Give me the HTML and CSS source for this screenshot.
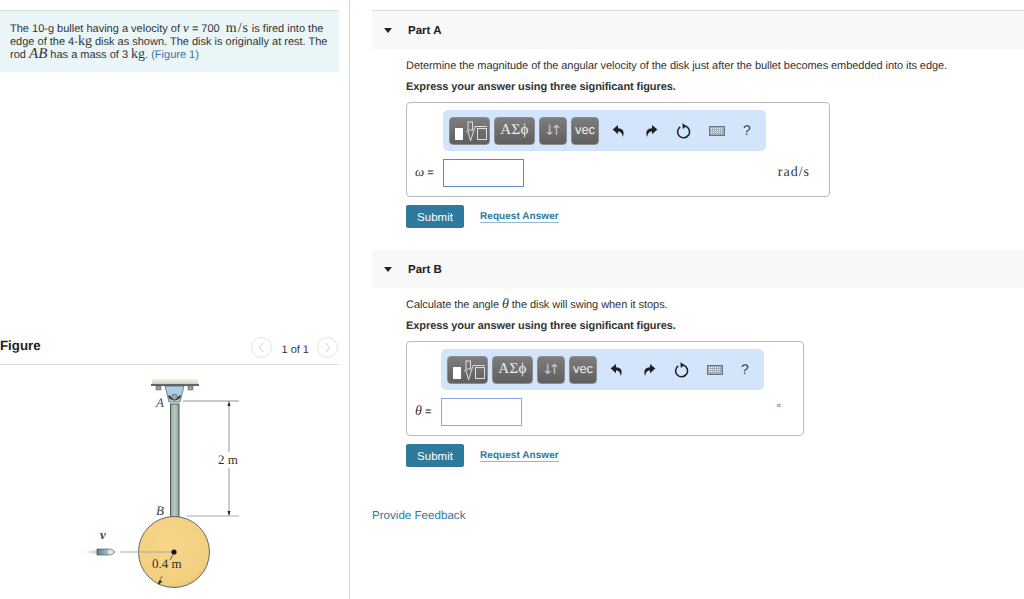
FILE: index.html
```html
<!DOCTYPE html>
<html lang="en">
<head>
  <meta charset="UTF-8" />
  <title>Part A and Part B</title>
  <link rel="stylesheet" href="styles.css">
</head>
<body>

<svg class="defs" width="0" height="0">
  <symbol id="undo" viewBox="0 0 14 14"><path d="M6 1 0.6 5.6 6 10.2V7.4C8.6 7.4 10.2 8.8 10.8 13 12.8 8 11.2 4.4 6 4.2Z"/></symbol>
  <symbol id="redo" viewBox="0 0 14 14"><path d="M8 1 13.4 5.6 8 10.2V7.4C5.4 7.4 3.8 8.8 3.2 13 1.2 8 2.8 4.4 8 4.2Z"/></symbol>
  <symbol id="reset" viewBox="0 0 16 16"><path d="M9.8 3.2A6 6 0 1 1 4.2 3.8" fill="none" stroke="#222" stroke-width="1.6"/><path d="M6.4 0.2 10.6 3 6.8 6Z"/></symbol>
  <symbol id="keys" viewBox="0 0 16 10">
    <rect x="0.5" y="0.5" width="15" height="9" fill="#a3adb5" stroke="#6c7278"/>
    <path d="M2 2.5H14M2 4.5H14M2 6.5H14" stroke="#eef2f8" stroke-width="1" stroke-dasharray="1 1"/>
  </symbol>
  <symbol id="template" viewBox="0 0 41 28">
    <rect x="6" y="11" width="8" height="12" fill="#fff"/>
    <rect x="19" y="5" width="4.5" height="8" fill="none" stroke="#ddd"/>
    <path d="M17 15 19 14 21.5 24 26 9.5H38" fill="none" stroke="#ddd"/>
    <rect x="28.5" y="11.5" width="9" height="11" fill="none" stroke="#ddd"/>
  </symbol>
  <symbol id="prev" viewBox="0 0 21 21"><path d="M12.5 5.5 8 10.5 12.5 15.5" fill="none" stroke="#c4c4c4"/></symbol>
  <symbol id="next" viewBox="0 0 21 21"><path d="M8.5 5.5 13 10.5 8.5 15.5" fill="none" stroke="#c4c4c4"/></symbol>
</svg>

<div class="page">

  <div class="left">
    <div class="problem">
      The 10-g bullet having a velocity of <i class="math">v</i> = 700 &nbsp;<span class="math unit-text wide">m/s</span> is fired into the
      edge of the 4-<span class="math unit-text">kg</span> disk as shown. The disk is originally at rest. The
      rod <i class="math big">AB</i> has a mass of 3 <span class="math unit-text">kg</span>. <a class="link" href="#">(Figure 1)</a>
    </div>

    <div class="figure-head">
      <strong>Figure</strong>
      <div class="pager">
        <svg class="round" width="21" height="21"><use href="#prev"/></svg>
        <span class="count">1 of 1</span>
        <svg class="round" width="21" height="21"><use href="#next"/></svg>
      </div>
    </div>

    <svg class="diagram" width="339" height="234" viewBox="0 0 339 234">
      <defs>
        <linearGradient id="ceil" x1="0" y1="0" x2="0" y2="1">
          <stop offset="0" stop-color="#f4f2ea"/>
          <stop offset="1" stop-color="#c9c7b6"/>
        </linearGradient>
        <linearGradient id="rod" x1="0" y1="0" x2="1" y2="0">
          <stop offset="0" stop-color="#8fa8a0"/>
          <stop offset="0.5" stop-color="#b6cbc4"/>
          <stop offset="1" stop-color="#8aa39b"/>
        </linearGradient>
        <radialGradient id="disk" cx="0.45" cy="0.4" r="0.65">
          <stop offset="0" stop-color="#f6d68c"/>
          <stop offset="0.85" stop-color="#f3cf7f"/>
          <stop offset="1" stop-color="#e0b968"/>
        </radialGradient>
        <linearGradient id="tail" x1="0" y1="0" x2="1" y2="0">
          <stop offset="0" stop-color="#fff"/>
          <stop offset="1" stop-color="#bcd2e0"/>
        </linearGradient>
        <linearGradient id="shell" x1="0" y1="0" x2="1" y2="0">
          <stop offset="0" stop-color="#5d7f94"/>
          <stop offset="0.55" stop-color="#9db7c6"/>
          <stop offset="0.7" stop-color="#ecebe2"/>
          <stop offset="1" stop-color="#dcdcd2"/>
        </linearGradient>
      </defs>

      <!-- ceiling and pin -->
      <rect x="152" y="13" width="46" height="6" fill="url(#ceil)"/>
      <rect x="151" y="18" width="48" height="2" fill="#666"/>
      <rect x="156" y="20" width="5" height="4" fill="#7fa6bd" stroke="#555" stroke-width="0.5"/>
      <rect x="188" y="20" width="5" height="4" fill="#7fa6bd" stroke="#555" stroke-width="0.5"/>
      <path d="M165 20H184L180 36H169Z" fill="#a8cfe3" stroke="#555" stroke-width="0.7"/>
      <path d="M168 30A7 7 0 0 0 181 30L179.5 29A5.4 5.4 0 0 1 169.5 29Z" fill="#333"/>

      <!-- rod -->
      <rect x="170.5" y="38" width="8.5" height="113" fill="url(#rod)" stroke="#555" stroke-width="1"/>
      <circle cx="174.5" cy="31" r="2.8" fill="#a3a9ab" stroke="#555" stroke-width="0.7"/>

      <!-- dimension lines -->
      <path d="M183 35H239" stroke="#777" stroke-width="0.8"/>
      <path d="M187 150H239" stroke="#aaa" stroke-width="1"/>
      <path d="M229 37V86M229 102V149" stroke="#999" stroke-width="1"/>
      <path d="M229 35 227.5 40H230.5ZM229 150 227.5 145H230.5Z" fill="#222"/>
      <text class="dim" x="218" y="98">2 m</text>

      <!-- disk -->
      <circle cx="174" cy="186" r="35.5" fill="url(#disk)" stroke="#666" stroke-width="1"/>
      <path d="M120 186H174" stroke="#aaa" stroke-width="1"/>
      <circle cx="174" cy="186" r="2.6" fill="#111"/>
      <path d="M173 189 170 194M162 210 158 218" stroke="#333" stroke-width="0.7"/>
      <path d="M158 219 162.4 215.6 159.6 214.2Z" fill="#222"/>
      <text class="dim" x="152" y="202">0.4 m</text>

      <!-- bullet -->
      <rect x="84" y="184.5" width="13" height="3" fill="url(#tail)"/>
      <path d="M97 183H109C112 183 114 185 115 186 114 187 112 189 109 189H97Z" fill="url(#shell)" stroke="#444" stroke-width="0.6"/>

      <text class="tag" x="156" y="41">A</text>
      <text class="tag" x="156" y="149">B</text>
      <text class="tag tag-v" x="100" y="173">v</text>
    </svg>
  </div>

  <div class="right">

    <div class="part-head first"><span class="caret"></span><strong>Part A</strong></div>
    <div class="part-body">
      <p class="question">Determine the magnitude of the angular velocity of the disk just after the bullet becomes embedded into its edge.</p>
      <p class="express">Express your answer using three significant figures.</p>

      <div class="answer answer-a">
        <div class="toolbar">
          <span class="tool t-wide"><svg width="41" height="28"><use href="#template"/></svg></span>
          <span class="tool t-wide serif">&Alpha;&Sigma;&#981;</span>
          <span class="tool t-arrows arrows">&#8595;&#8593;</span>
          <span class="tool t-arrows vec">vec</span>
          <svg class="act act-first" width="14" height="14"><use href="#undo"/></svg>
          <svg class="act" width="14" height="14"><use href="#redo"/></svg>
          <svg class="act" width="16" height="16"><use href="#reset"/></svg>
          <svg class="act act-keys" width="16" height="10"><use href="#keys"/></svg>
          <span class="help">?</span>
        </div>
        <div class="entry">
          <span class="symbol"><i class="math">&omega;</i> =</span>
          <span class="field"></span>
          <span class="unit">rad/s</span>
        </div>
      </div>

      <div class="actions">
        <button class="submit">Submit</button>
        <a class="request" href="#">Request Answer</a>
      </div>
    </div>

    <div class="part-head"><span class="caret"></span><strong>Part B</strong></div>
    <div class="part-body">
      <p class="question">Calculate the angle <i class="math theta">&theta;</i> the disk will swing when it stops.</p>
      <p class="express">Express your answer using three significant figures.</p>

      <div class="answer answer-b">
        <div class="toolbar">
          <span class="tool t-wide"><svg width="41" height="28"><use href="#template"/></svg></span>
          <span class="tool t-wide serif">&Alpha;&Sigma;&#981;</span>
          <span class="tool t-arrows arrows">&#8595;&#8593;</span>
          <span class="tool t-arrows vec">vec</span>
          <svg class="act act-first" width="14" height="14"><use href="#undo"/></svg>
          <svg class="act" width="14" height="14"><use href="#redo"/></svg>
          <svg class="act" width="16" height="16"><use href="#reset"/></svg>
          <svg class="act act-keys" width="16" height="10"><use href="#keys"/></svg>
          <span class="help">?</span>
        </div>
        <div class="entry">
          <span class="symbol"><i class="math theta">&theta;</i> =</span>
          <span class="field"></span>
          <span class="unit degree">&deg;</span>
        </div>
      </div>

      <div class="actions">
        <button class="submit">Submit</button>
        <a class="request" href="#">Request Answer</a>
      </div>
    </div>

    <a class="feedback" href="#">Provide Feedback</a>
  </div>

</div>

</body>
</html>
```

FILE: styles.css
```css
body {
  margin: 0;
  background: #fff;
  color: #333;
  font-family: "Liberation Sans", Arial, sans-serif;
  font-size: 11px;
  text-rendering: geometricPrecision;
  overflow: hidden;
}

a {
  text-decoration: none;
}

.defs {
  display: block;
  height: 0;
}

.page {
  display: flex;
  height: 599px;
}

.left {
  width: 349px;
  flex: none;
  border-right: 1px solid #d8d8d8;
  padding-top: 10px;
}

.problem {
  width: 319px;
  padding: 12px 10px 11px;
  height: 38px;
  border-top: 1px solid #dcdfe2;
  background: #eaf5f8;
  line-height: 13px;
}

.math {
  font-family: "Liberation Serif", serif;
  font-size: 13px;
  line-height: 0;
}

.unit-text {
  font-size: 14px;
}

.unit-text.wide {
  letter-spacing: 0.9px;
}

.math.big {
  font-size: 15px;
}

.theta {
  font-size: 14px;
}

.link {
  color: #2f7a9c;
}

.figure-head {
  width: 339px;
  height: 29px;
  margin-top: 263px;
  display: flex;
  justify-content: space-between;
  align-items: flex-start;
  border-bottom: 1px solid #ddd;
}

.figure-head strong {
  font-size: 13.3px;
  color: #222;
  line-height: 22px;
}

.pager {
  display: flex;
  align-items: center;
  gap: 9px;
  margin-top: 2px;
  margin-right: 1px;
}

.count {
  margin-top: 5px;
  margin-right: -1px;
}

.round {
  border: 1px solid #e4e4e4;
  border-radius: 50%;
  box-sizing: border-box;
}

.diagram {
  display: block;
  margin-top: 1px;
}

.dim {
  font-family: "Liberation Serif", serif;
  font-size: 13px;
  fill: #333;
}

.tag {
  font-family: "Liberation Serif", serif;
  font-size: 13px;
  font-style: italic;
  fill: #444;
}

.tag-v {
  font-weight: bold;
}

.right {
  flex: 1;
  margin-left: 22px;
  padding-top: 10px;
  min-width: 0;
}

.part-head {
  height: 38px;
  background: #f8f8f8;
  display: flex;
  align-items: center;
  padding-left: 12px;
}

.part-head.first {
  border-top: 1px solid #dcdcdc;
}

.part-head strong {
  margin: 2px 0 0 16px;
  font-size: 11.5px;
  color: #222;
}

.caret {
  width: 0;
  height: 0;
  border-left: 4px solid transparent;
  border-right: 4px solid transparent;
  border-top: 5px solid #222;
}

.part-body {
  padding: 11px 0 0 34px;
  height: 201px;
  box-sizing: border-box;
}

.question {
  margin: 0;
  line-height: 13px;
  letter-spacing: -0.06px;
}

.express {
  margin: 8px 0 0;
  font-weight: bold;
  line-height: 13px;
  letter-spacing: -0.08px;
}

.answer {
  margin-top: 8px;
  border: 1px solid #bbb;
  border-radius: 4px;
  box-sizing: border-box;
  height: 95px;
  padding-top: 7px;
}

.answer-a {
  width: 424px;
  padding-left: 36px;
}

.answer-b {
  width: 398px;
  padding-left: 34px;
}

.toolbar {
  width: 323px;
  height: 41px;
  box-sizing: border-box;
  padding: 7px 6px;
  background: #d2e5fb;
  border-radius: 5px;
  display: flex;
  align-items: center;
  gap: 4px;
}

.tool {
  height: 28px;
  box-sizing: border-box;
  border-radius: 4px;
  border: 1px solid #8c8c8c;
  background: linear-gradient(#7d7d7d, #5f5f5f);
  color: #eee;
  display: flex;
  align-items: center;
  justify-content: center;
  font-size: 12px;
}

.tool svg {
  margin: -1px;
  flex: none;
}

.t-wide {
  width: 41px;
}

.t-arrows {
  width: 28px;
}

.serif {
  font-family: "Liberation Serif", serif;
  font-size: 15px;
  letter-spacing: 0.3px;
}

.arrows {
  font-size: 14px;
  font-family: "DejaVu Sans", sans-serif;
  letter-spacing: -5px;
  padding-right: 5px;
  color: #c8c8c8;
}

.vec {
  font-size: 13px;
  padding-bottom: 3px;
}

.act {
  fill: #222;
  margin-left: 14px;
  flex: none;
}

.act-first {
  margin-left: 9px;
}

.act-keys {
  margin-left: 13px;
}

.help {
  margin: -2px 0 0 14px;
  font-size: 14px;
  color: #333;
}

.entry {
  display: flex;
  align-items: center;
  height: 28px;
  margin-top: 8px;
  margin-left: -36px;
}

.answer-b .entry {
  margin-left: -34px;
}

.symbol {
  width: 36px;
  padding-left: 8px;
  box-sizing: border-box;
  flex: none;
}

.answer-b .symbol {
  width: 34px;
}

.field {
  width: 81px;
  height: 28px;
  box-sizing: border-box;
  border: 1px solid #5f86c8;
  background: #fff;
}

.answer-b .field {
  border-color: #8aa8e0;
}

.unit {
  margin-left: auto;
  margin-right: 19px;
  font-family: "Liberation Serif", serif;
  font-size: 14px;
  letter-spacing: 1px;
}

.unit.degree {
  margin-right: 21px;
  margin-top: -8px;
  font-size: 11px;
}

.actions {
  display: flex;
  align-items: center;
  margin-top: 8px;
  gap: 16px;
}

.submit {
  width: 58px;
  height: 23px;
  padding: 0;
  border: none;
  border-radius: 2px;
  background: #2f7a9c;
  color: #fff;
  font-family: "Liberation Sans", Arial, sans-serif;
  font-size: 11.5px;
}

.request {
  color: #2f7a9c;
  font-weight: bold;
  font-size: 10px;
  letter-spacing: 0.05px;
  border-bottom: 1px solid #8fbbd0;
  line-height: 11px;
}

.feedback {
  display: block;
  margin-top: 20px;
  color: #2f7a9c;
  font-size: 11.6px;
}
```
